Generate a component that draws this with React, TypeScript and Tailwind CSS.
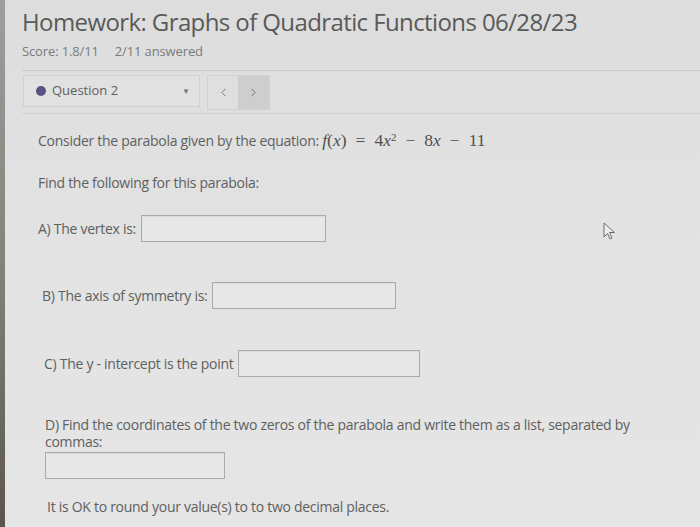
import React from 'react'
import { ChevronLeft, ChevronRight } from 'lucide-react'

const Field = ({ w }: { w: string }) => (
  <span className={`inline-block h-[27px] ${w} border border-[#a9abaa] bg-[#e6e7e6] shadow-[inset_0_1px_1px_rgba(0,0,0,0.06)]`} />
)

const M = ({ children }: { children: React.ReactNode }) => (
  <span className="italic">{children}</span>
)

const Op = ({ children }: { children: React.ReactNode }) => (
  <span className="mx-[9px]">{children}</span>
)

export default function App() {
  return (
    <div
      className="relative flex h-[527px] w-[700px] overflow-hidden bg-[#e1e2e1] text-[#5d5d5d]"
      style={{ fontFamily: '"Open Sans", "Liberation Sans", sans-serif' }}
    >
      {/* screen bezel edge */}
      <div className="w-[5px] shrink-0 bg-gradient-to-b from-[#a09e9a] via-[#85827e] to-[#5b5651]" />

      <div className="flex-1 bg-gradient-to-b from-[#dcdddc] via-[#e2e3e2] to-[#e4e5e4]">
        {/* header */}
        <div className="pl-[17px] pt-[7px]">
          <h1 className="text-[24px] leading-[30px] font-normal tracking-[-0.025em] text-[#595959]">
            Homework: Graphs of Quadratic Functions 06/28/23
          </h1>
          <div className="mt-[6px] flex gap-[16px] text-[13px] leading-[16px] tracking-[-0.01em] text-[#7b7b7b]">
            <span>Score: 1.8/11</span>
            <span>2/11 answered</span>
          </div>
        </div>

        <div className="ml-[17px] mt-[11px] border-t border-[#cacbca]" />

        {/* question nav */}
        <div className="flex items-stretch gap-[7px] pl-[18px] pt-[4px]">
          <div className="flex h-[32px] w-[177px] items-center border border-[#cfd0cf] bg-[#e0e1e0] pl-[12px] pr-[9px]">
            <span className="h-[10px] w-[10px] rounded-full bg-[#5b5187]" />
            <span className="ml-[6px] text-[13px] text-[#5f5f5f]">Question 2</span>
            <span className="ml-auto text-[8px] text-[#777]">▼</span>
          </div>
          <div className="flex h-[35px] w-[63px] border border-[#d0d1d0]">
            <div className="flex w-[30px] items-center justify-center text-[#6f6f6f]">
              <ChevronLeft size={13} strokeWidth={1.6} />
            </div>
            <div className="flex flex-1 items-center justify-center bg-[#cdcecd] text-[#656565]">
              <ChevronRight size={13} strokeWidth={1.6} />
            </div>
          </div>
        </div>

        <div className="ml-[17px] mt-[3px] border-t border-[#cfd0cf]" />

        {/* question body */}
        <div className="pl-[33px] text-[14px] leading-[18px] tracking-[-0.02em] text-[#606060]">
          <p className="mt-[17px]">
            Consider the parabola given by the equation:{' '}
            <span className="text-[17.5px] tracking-normal text-[#505050]" style={{ fontFamily: '"Liberation Serif", "DejaVu Serif", serif' }}>
              <M>f</M>(<M>x</M>)<Op>=</Op>4<M>x</M>
              <sup className="text-[11px]">2</sup>
              <Op>−</Op>8<M>x</M>
              <Op>−</Op>11
            </span>
          </p>

          <p className="mt-[24px]">Find the following for this parabola:</p>

          <div className="mt-[23px] flex items-center gap-[5px]">
            <span>A) The vertex is:</span>
            <Field w="w-[185px]" />
          </div>

          <div className="ml-[4px] mt-[40px] flex items-center gap-[5px]">
            <span>B) The axis of symmetry is:</span>
            <Field w="w-[184px]" />
          </div>

          <div className="ml-[6px] mt-[41px] flex items-center gap-[5px]">
            <span>C) The y - intercept is the point</span>
            <Field w="w-[182px]" />
          </div>

          <div className="ml-[7px] mt-[39px]">
            <p className="w-[600px] leading-[17px]">
              D) Find the coordinates of the two zeros of the parabola and write them as a list, separated by commas:
            </p>
            <div className="mt-[2px]">
              <Field w="w-[180px]" />
            </div>
          </div>

          <p className="ml-[9px] mt-[15px]">It is OK to round your value(s) to to two decimal places.</p>
        </div>
      </div>

      {/* mouse pointer */}
      <svg className="absolute left-[603px] top-[222px]" width="14" height="20" viewBox="0 0 14 20">
        <path d="M1 1 L1 15 L4.5 11.5 L7 17 L9 16 L6.5 10.5 L11.5 10.5 Z" fill="#eeeeee" stroke="#6a6a6a" strokeWidth="1" strokeLinejoin="round" />
      </svg>
    </div>
  )
}
